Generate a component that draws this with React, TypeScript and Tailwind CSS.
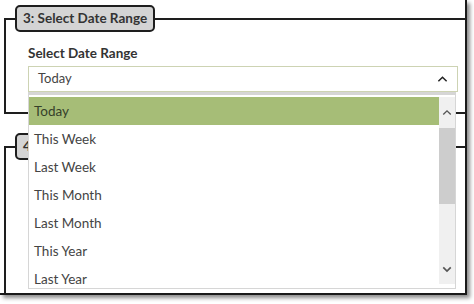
const options = ["Today", "This Week", "Last Week", "This Month", "Last Month", "This Year", "Last Year"];

const ChevronUp = ({ className }: { className?: string }) => (
  <svg viewBox="0 0 12 8" className={className} fill="none" stroke="currentColor" strokeWidth={1.6}>
    <path d="M1.5 6.5 6 2l4.5 4.5" />
  </svg>
);

const ChevronDown = ({ className }: { className?: string }) => (
  <svg viewBox="0 0 12 8" className={className} fill="none" stroke="currentColor" strokeWidth={2}>
    <path d="M1.5 1.5 6 6l4.5-4.5" />
  </svg>
);

const Legend = ({ children }: { children: React.ReactNode }) => (
  <legend className="ml-[9px] h-[27px] flex items-center rounded-[5px] border-2 border-[#1e1e1e] bg-[#d4d4d4] px-[6px] text-[13.5px] font-bold text-[#333]">
    {children}
  </legend>
);

export default function App() {
  const selected = "Today";

  return (
    <div className="w-[474px] h-[304px] bg-white font-['Lato',sans-serif]">
      <div className="relative w-[467px] h-[295px] overflow-hidden bg-white border-r-2 border-b-2 border-[#1a1a1a] shadow-[3px_3px_4px_rgba(0,0,0,0.45)]">
        {/* step 3 */}
        <fieldset className="mt-[5px] ml-[4px] w-[461px] border-2 border-r-0 border-[#1e1e1e] pb-[20px]">
          <Legend>3: Select Date Range</Legend>
          <div className="pl-[22px] pr-[7px] pt-[12px]">
            <div className="text-[13.5px] leading-[18px] font-bold text-[#333]">Select Date Range</div>
            <div className="mt-[4px] h-[26px] flex items-center justify-between border border-[#cdd3b3] bg-white pl-[9px] pr-[9px] text-[13px] text-[#444]">
              <span>{selected}</span>
              <ChevronUp className="w-[11px] h-[8px] text-[#222]" />
            </div>
          </div>
        </fieldset>

        {/* step 4 */}
        <fieldset className="mt-[19px] ml-[4px] w-[461px] h-[200px] border-2 border-r-0 border-[#1e1e1e]">
          <Legend>4: Select Format</Legend>
        </fieldset>

        {/* open dropdown list */}
        <div className="absolute left-[28px] top-[92px] w-[428px] h-[197px] flex border border-[#d6d6d6] border-t-[3px] bg-white pt-[2px] pb-[4px]">
          <ul className="flex-1 overflow-hidden">
            {options.map((o) => (
              <li
                key={o}
                className={`h-[28px] flex items-center pl-[5px] text-[13.5px] ${
                  o === selected ? "bg-[#a6bd77] text-[#35402a]" : "text-[#444]"
                }`}
              >
                {o}
              </li>
            ))}
          </ul>
          <div className="w-[16px] flex flex-col bg-[#f0f0f0]">
            <div className="h-[31px] flex items-center justify-center">
              <ChevronUp className="w-[10px] h-[7px] text-[#555]" />
            </div>
            <div className="h-[76px] bg-[#cdcdcd]" />
            <div className="flex-1" />
            <div className="h-[30px] flex items-center justify-center">
              <ChevronDown className="w-[10px] h-[7px] text-[#555]" />
            </div>
          </div>
        </div>
      </div>
    </div>
  );
}
